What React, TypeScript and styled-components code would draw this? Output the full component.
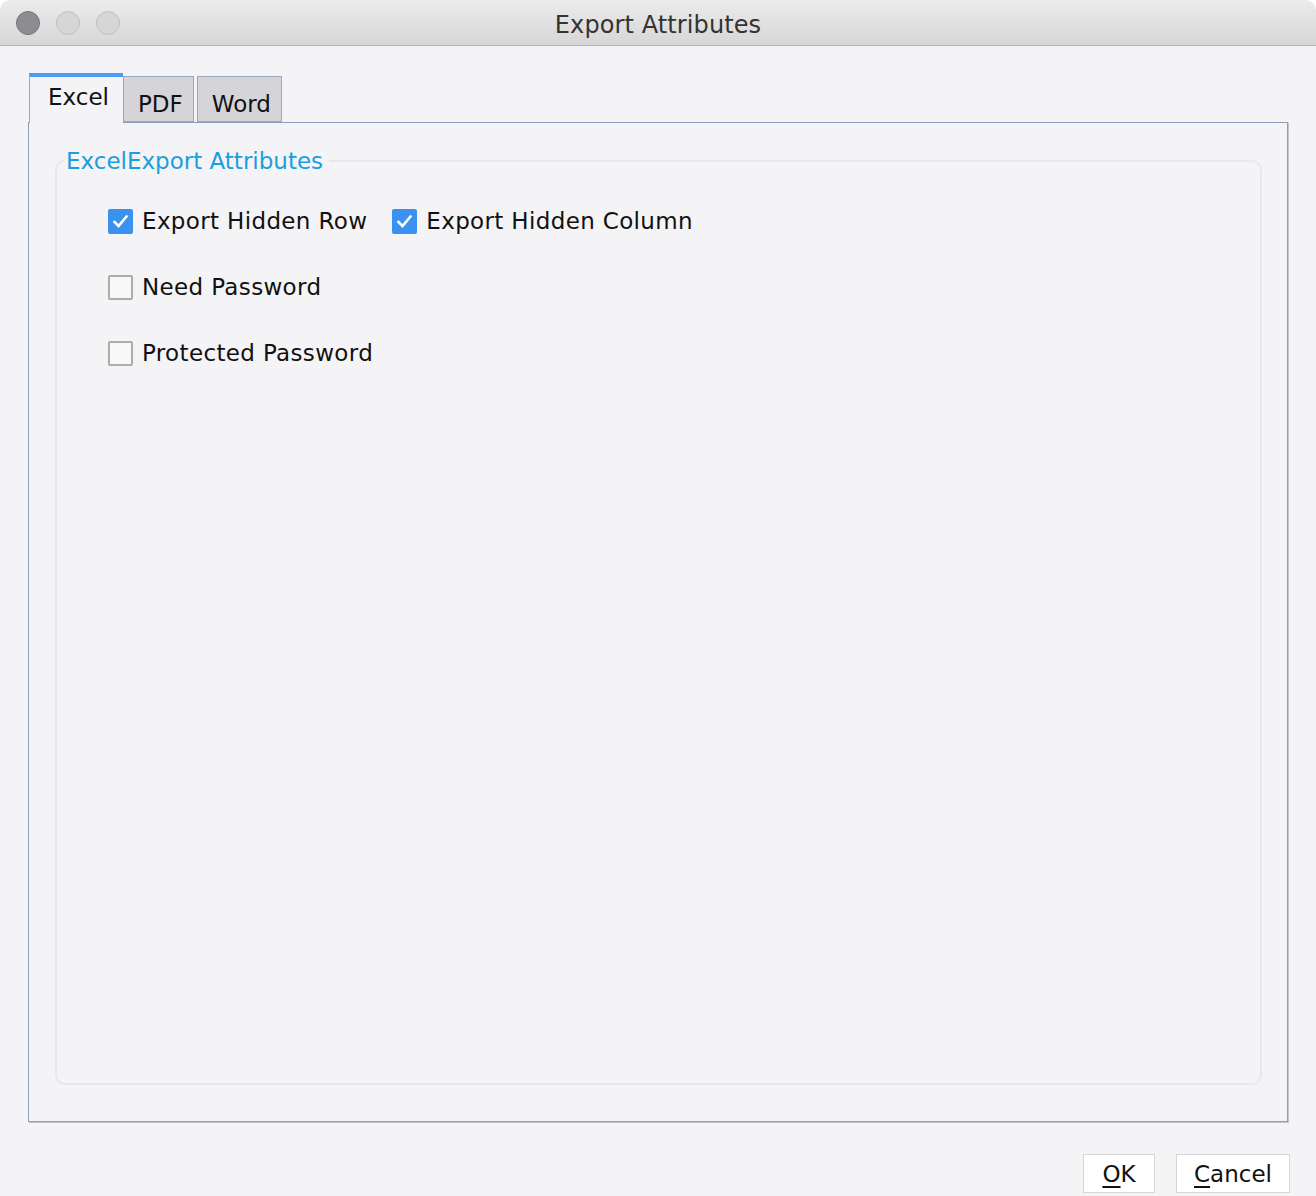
import React from "react";
import styled, { createGlobalStyle } from "styled-components";

const GlobalStyle = createGlobalStyle`
  html, body {
    margin: 0;
    padding: 0;
    background: #ffffff;
  }
  * {
    box-sizing: border-box;
  }
`;

const CheckMark = () => (
  <svg width="17" height="15" viewBox="0 0 17 15">
    <path
      d="M2.5 8 L6.5 12 L14.5 2.5"
      fill="none"
      stroke="#ffffff"
      strokeWidth="2.6"
      strokeLinecap="square"
    />
  </svg>
);

type CheckProps = {
  label: string;
  checked?: boolean;
};

const CheckItem = ({ label, checked }: CheckProps) => (
  <CheckLabel>
    <Box $checked={checked}>{checked && <CheckMark />}</Box>
    <span>{label}</span>
  </CheckLabel>
);

const Mnemonic = ({ text }: { text: string }) => (
  <>
    <u>{text[0]}</u>
    {text.slice(1)}
  </>
);

const App = () => {
  return (
    <Window>
      <GlobalStyle />
      <TitleBar>
        <Lights>
          <Light $dark />
          <Light />
          <Light />
        </Lights>
        <Title>Export Attributes</Title>
      </TitleBar>
      <Body>
        <Tabs>
          <Tab $active>Excel</Tab>
          <Tab>PDF</Tab>
          <Tab>Word</Tab>
        </Tabs>
        <Panel>
          <Group>
            <Legend>ExcelExport Attributes</Legend>
            <Options>
              <Row>
                <CheckItem label="Export Hidden Row" checked />
                <CheckItem label="Export Hidden Column" checked />
              </Row>
              <Row>
                <CheckItem label="Need Password" />
              </Row>
              <Row>
                <CheckItem label="Protected Password" />
              </Row>
            </Options>
          </Group>
        </Panel>
        <Footer>
          <Button $width={72}>
            <Mnemonic text="OK" />
          </Button>
          <Button $width={114}>
            <Mnemonic text="Cancel" />
          </Button>
        </Footer>
      </Body>
    </Window>
  );
};

export default App;

const Window = styled.div`
  width: 1316px;
  height: 1196px;
  overflow: hidden;
  background: #f4f4f6;
  border-radius: 10px 10px 0 0;
  font-family: "DejaVu Sans", "Liberation Sans", sans-serif;
  color: #111111;
  display: flex;
  flex-direction: column;
`;

const TitleBar = styled.div`
  height: 46px;
  flex-shrink: 0;
  display: flex;
  align-items: center;
  justify-content: center;
  padding-top: 5px;
  position: relative;
  background: linear-gradient(#ececec, #d6d6d6);
  border-bottom: 1px solid #b3b3b3;
  border-radius: 10px 10px 0 0;
`;

const Lights = styled.div`
  position: absolute;
  left: 16px;
  top: 11px;
  display: flex;
  gap: 16px;
`;

const Light = styled.div<{ $dark?: boolean }>`
  width: 24px;
  height: 24px;
  border-radius: 50%;
  background: ${(p) => (p.$dark ? "#8d8d91" : "#d6d6d6")};
  border: 1px solid ${(p) => (p.$dark ? "#76767a" : "#c0c0c0")};
`;

const Title = styled.div`
  font-size: 24px;
  color: #333333;
  letter-spacing: 0.1px;
`;

const Body = styled.div`
  flex: 1;
  padding: 27px 26px 0 28px;
  display: flex;
  flex-direction: column;
`;

const Tabs = styled.div`
  display: flex;
  align-items: flex-end;
  height: 49px;
  padding-left: 1px;
  position: relative;
  z-index: 1;
`;

const Tab = styled.div<{ $active?: boolean }>`
  height: ${(p) => (p.$active ? "50px" : "46px")};
  margin-bottom: ${(p) => (p.$active ? "-1px" : "0")};
  margin-right: ${(p) => (p.$active ? "0" : "3px")};
  padding: ${(p) => (p.$active ? "7px 14px 0 18px" : "14px 10px 0 14px")};
  font-size: 23px;
  color: #111111;
  background: ${(p) => (p.$active ? "#f4f4f6" : "#d5d5d9")};
  border: 1px solid #9aa7bf;
  border-bottom: ${(p) => (p.$active ? "none" : "1px solid #9aa7bf")};
  border-top: ${(p) => (p.$active ? "4px solid #4a9bf3" : "1px solid #9aa7bf")};
  border-right: ${(p) => (p.$active ? "none" : "1px solid #9aa7bf")};
`;

const Panel = styled.div`
  width: 1260px;
  height: 1000px;
  border: 1px solid #8d9eb9;
  box-shadow: 1px 1px 0 #c4c4c8;
  padding: 23px 25px 36px 26px;
  display: flex;
`;

const Group = styled.fieldset`
  flex: 1;
  margin: 0;
  padding: 0;
  border: 2px solid #e8e8ea;
  border-radius: 10px;
  display: flex;
  flex-direction: column;
`;

const Legend = styled.legend`
  margin-left: 7px;
  padding: 0 6px 0 2px;
  font-size: 23px;
  line-height: 30px;
  color: #1a9ee0;
`;

const Options = styled.div`
  padding: 12px 0 0 51px;
  display: flex;
  flex-direction: column;
`;

const Row = styled.div`
  height: 66px;
  display: flex;
  align-items: center;
  gap: 25px;
`;

const CheckLabel = styled.label`
  display: flex;
  align-items: center;
  gap: 9px;
  font-size: 23px;
  letter-spacing: 0.35px;
  color: #111111;
`;

const Box = styled.span<{ $checked?: boolean }>`
  width: 25px;
  height: 25px;
  display: flex;
  align-items: center;
  justify-content: center;
  border-radius: 2px;
  background: ${(p) => (p.$checked ? "#3a91ee" : "#f8f8f8")};
  border: ${(p) => (p.$checked ? "none" : "2px solid #acacac")};
`;

const Footer = styled.div`
  display: flex;
  justify-content: flex-end;
  gap: 21px;
  margin-top: 32px;
`;

const Button = styled.div<{ $width: number }>`
  width: ${(p) => p.$width}px;
  height: 39px;
  display: flex;
  align-items: center;
  justify-content: center;
  background: #ffffff;
  border: 1px solid #d6d6d6;
  font-size: 23px;
  color: #111111;
  u {
    text-underline-offset: 4px;
  }
`;
